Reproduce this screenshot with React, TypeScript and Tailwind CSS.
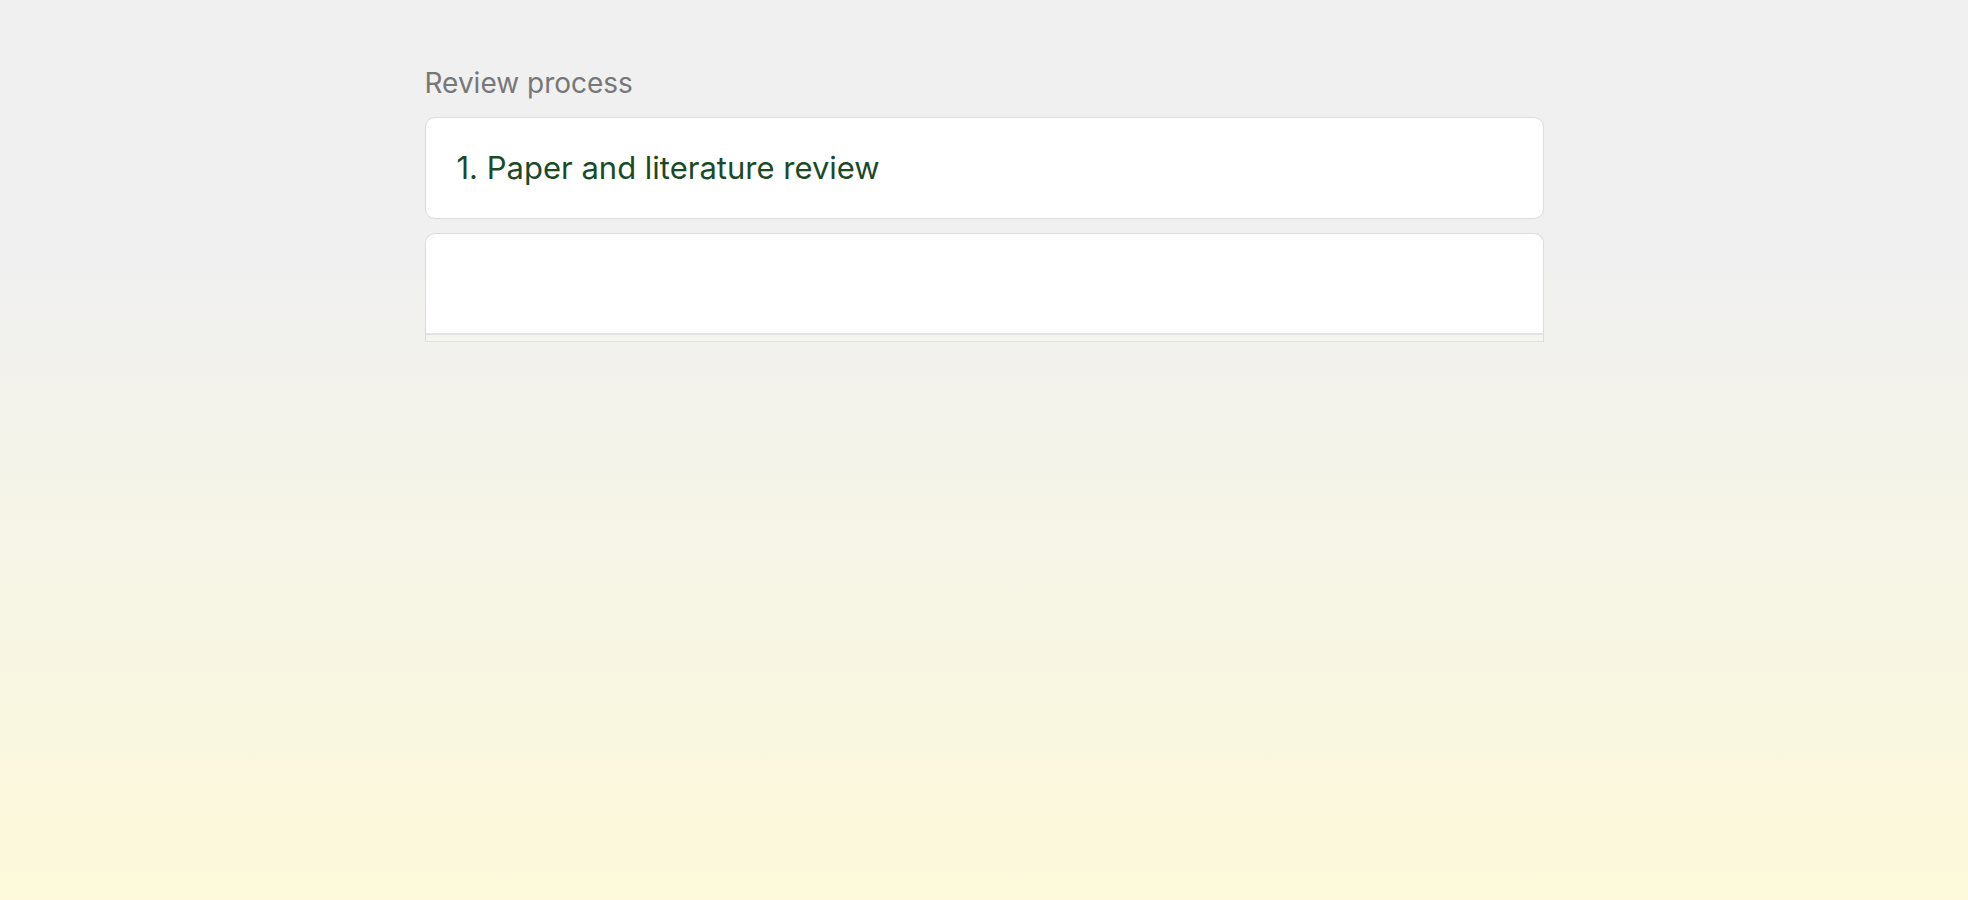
export default function App() {
  return (
    <div
      className="min-h-screen w-full bg-[linear-gradient(180deg,#f0f0f0_0%,#f0f0f0_30%,#f5f4e8_55%,#fdf9da_100%)] pt-[65px]"
      style={{ fontFamily: "Inter, 'Noto Sans', sans-serif" }}
    >
      <div className="mx-auto w-[1119px]">
        <h2 className="text-[28px] leading-[36px] font-normal text-[#777777]">Review process</h2>

        <div className="mt-4 flex h-[102px] items-center rounded-[10px] border border-[#dcdcdc] bg-white px-[31px]">
          <span className="text-[31px] leading-[40px] text-[#1b4a27]">1. Paper and literature review</span>
        </div>

        <div className="mt-[14px] h-[112px] overflow-hidden">
          <div className="rounded-t-[10px] border border-b-0 border-[#dcdcdc] bg-white">
            <div className="h-[99px]" />
            <div className="h-[2px] bg-[#e3e3e0]" />
            <div className="h-[6px] bg-[#f5f5f0]" />
            <div className="h-px bg-[#e2e2de]" />
          </div>
        </div>
      </div>
    </div>
  );
}
